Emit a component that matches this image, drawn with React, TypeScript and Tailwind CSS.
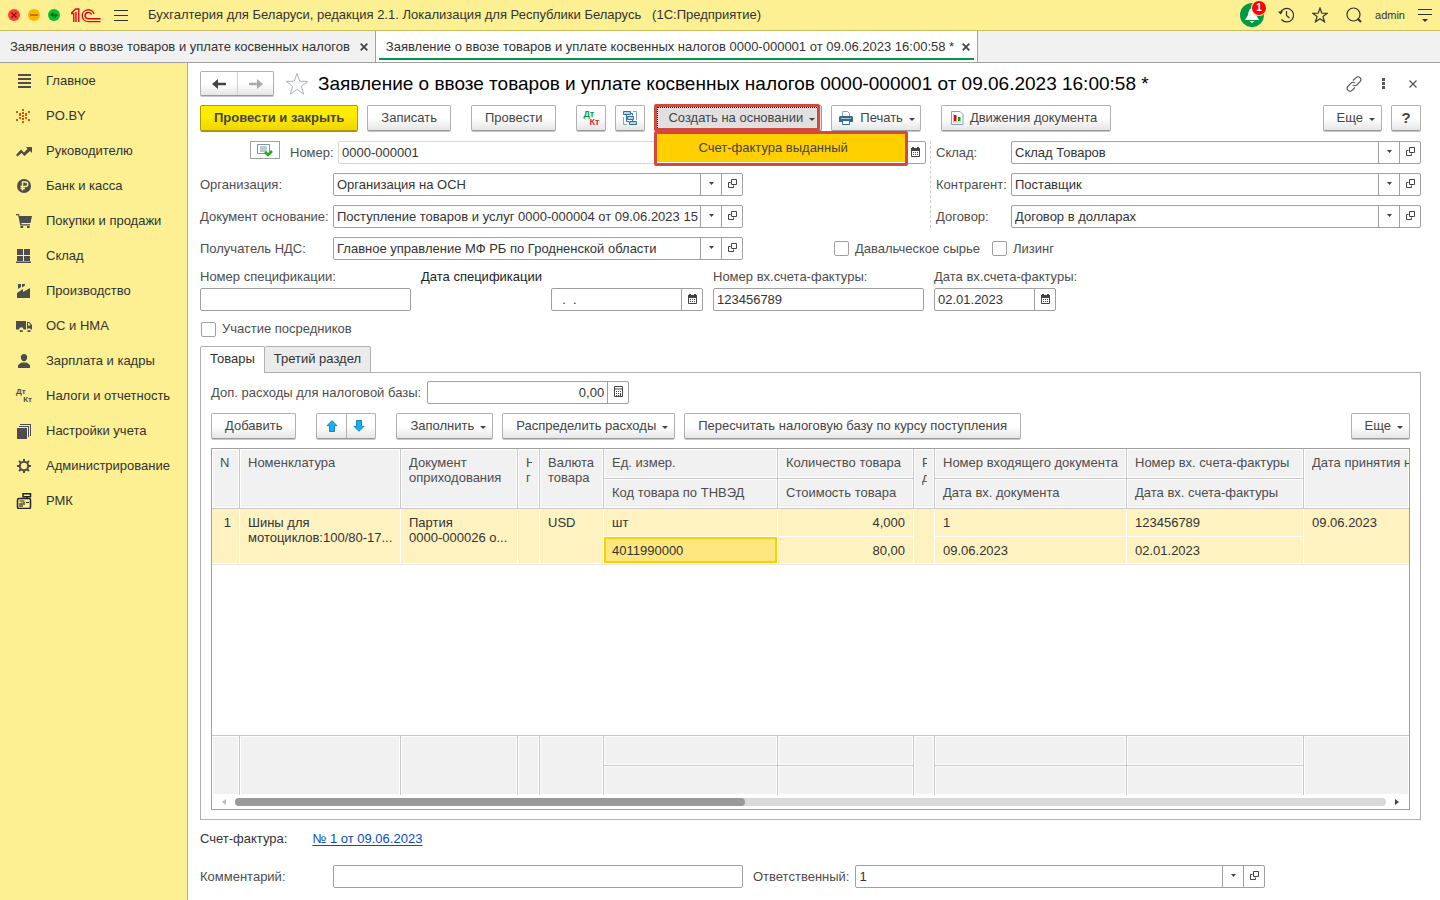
import { useState, type ReactNode } from "react";
import clsx from "clsx";

/* ---------- icons ---------- */

const MENU_ICONS: Record<string, ReactNode> = {
  main: <path d="M2 1h13v2H2zM2 5h13v2H2zM2 9h13v2H2zM2 13h13v2H2z" />,
  poby: (
    <path
      fill="#e8500a"
      d="M6 1h2v2H6zM6 4h2v2H6zM6 7h2v2H6zM6 10h2v2H6zM6 13h2v2H6zM0 3h2v2H0zM3 5h2v2H3zM3 9h2v2H3zM0 11h2v2H0zM9 5h2v2H9zM9 9h2v2H9zM12 3h2v2h-2zM12 11h2v2h-2zM3 7h2v1H3zM9 7h2v1H9z"
    />
  ),
  manager: (
    <path d="M0 12l5-5.500 3 3L11.500 5.800 10 4h6v6l-2-2-5.500 5-3-3L1.500 13.500z" />
  ),
  bank: (
    <>
      <circle cx="8" cy="8" r="7" />
      <path
        d="M6.500 12.500V4h3a2.200 2.200 0 0 1 0 4.500H4.500M4.500 10.500H9"
        fill="none"
        stroke="#fcf092"
        strokeWidth="1.400"
      />
    </>
  ),
  cart: (
    <path d="M0 1h3l.6 2H16l-1.500 7H5.200l.3 1.300H14V12.500H4.300L2.200 2.300H0zM4.500 13h2.600v2H4.500zM11 13h2.600v2H11z" />
  ),
  stock: <path d="M1 1h6v6H1zM8 1h6v6H8zM1 8h6v5H1zM8 8h6v5H8zM0 13.500h15V15H0z" />,
  factory: (
    <path d="M1 10l6-4v3l7-4v10H1zM2 1h3v3L2 6zM6 1h3v1.500L6 4.500z" />
  ),
  truck: (
    <path d="M0 3h10v8.500H7.500a2.200 2.200 0 0 0-4.400 0H0zM11 4h2.500L16 7v4.500h-1a2.200 2.200 0 0 0-4 0zM12 5v2.500h2.800L13 5zM3.800 12.200h3V14h-3zM11.500 12.200h3V14h-3z" />
  ),
  person: (
    <path d="M8 1c2 0 3.200 1.400 3.200 3.300S10 8.300 8 8.300 4.800 6.200 4.800 4.300 6 1 8 1zM2 15v-3l3.500-2.500h5L14 12v3z" />
  ),
  settings: <path d="M1 5h10v11H1zM3 3h10v11h-1V4H3zM4 1h11v12h-1V2H4z" />,
  gear: (
    <>
      <circle cx="8" cy="8" r="4.200" fill="none" stroke="#4d4d4d" strokeWidth="2" />
      <path
        d="M8 1v2.500M8 12.500V15M1 8h2.500M12.500 8H15M3 3l1.800 1.800M11.200 11.200L13 13M13 3l-1.800 1.800M4.800 11.200L3 13"
        stroke="#4d4d4d"
        strokeWidth="2"
      />
    </>
  ),
  cash: (
    <g fill="none" stroke="#222">
      <rect x="1.500" y="5.500" width="13" height="10" rx="1.500" strokeWidth="1.500" />
      <path d="M7 .8h7.500v3H7zM11 3.800v2" strokeWidth="1.500" />
      <path d="M3.500 8h5M4 14V10M6 14V9.500M8 12V9M10 9.500h3" strokeWidth="1.200" />
    </g>
  ),
};

function DtKt({ className, top, bottom }: { className: string; top?: string; bottom?: string }) {
  return (
    <span className={clsx("flex w-4 flex-col leading-[8px] font-bold", className)}>
      <span className={clsx("self-start", top)}>Дт</span>
      <span className={clsx("self-end", bottom)}>Кт</span>
    </span>
  );
}

function Logo() {
  return (
    <svg width="30" height="15" viewBox="0 0 30 15" fill="none" stroke="#e30613" strokeWidth="1.400" aria-label="1С">
      <path d="M0 5.500h2.800V14M.5 5L4.500 1h3.300v13M5 4v10" />
      <path d="M23 6A6 5.900 0 1 0 17.300 13.600H29.500" />
      <path d="M20.500 6.500A3.300 3.200 0 1 0 17.300 10.800H29.500" />
    </svg>
  );
}

function Caret() {
  return (
    <svg width="6" height="3" viewBox="0 0 6 3" className="mt-0.5 shrink-0">
      <path d="M0 0h6L3 3z" fill="#444" />
    </svg>
  );
}

function CalendarIcon() {
  return (
    <svg width="9" height="10" viewBox="0 0 9 10">
      <path d="M.5 2.500v7h8v-7" fill="none" stroke="#444" />
      <path
        d="M0 1h9v3H0zM1 0h2v2H1zM6 0h2v2H6zM2 5h1v1H2zM4 5h1v1H4zM6 5h1v1H6zM2 7h1v1H2zM4 7h1v1H4zM6 7h1v1H6z"
        fill="#444"
      />
    </svg>
  );
}

function CalculatorIcon() {
  return (
    <svg width="9" height="11" viewBox="0 0 9 11">
      <path d="M.5.5h8v10h-8zM1 3h7" fill="none" stroke="#444" />
      <path
        d="M2 5h1v1H2zM4 5h1v1H4zM6 5h1v1H6zM2 7h1v1H2zM4 7h1v1H4zM6 7h1v3H6zM2 9h1v1H2zM4 9h1v1H4z"
        fill="#444"
      />
    </svg>
  );
}

function OpenIcon() {
  return (
    <svg width="9" height="9" viewBox="0 0 9 9" fill="none" stroke="#444">
      <path d="M3.500.5h5v5h-5zM2.500 3.500h-2v5h5v-2" />
    </svg>
  );
}

function Star({ size, color }: { size: number; color: string }) {
  return (
    <svg width={size} height={size} viewBox="0 0 24 24" fill="none" stroke={color} strokeWidth={size > 20 ? 1 : 1.8}>
      <path d="M12 1.500l2.700 7.700 8.200.2-6.500 4.900 2.300 7.900L12 17.500l-6.700 4.700 2.300-7.900L1.100 9.400l8.200-.2z" />
    </svg>
  );
}

/* ---------- controls ---------- */

const RAISED =
  "rounded-[2px] border border-[#b0b0b0] border-b-[#999] bg-linear-to-b from-white from-50% to-[#e6e6e6] text-[#444] shadow-[0_1px_0_#c8c8c8]";

interface ButtonProps {
  children: ReactNode;
  label?: string;
  dropdown?: boolean;
  className?: string;
}

function Button({ children, label, dropdown, className = "px-[13px]" }: ButtonProps) {
  return (
    <button
      type="button"
      aria-label={label}
      className={clsx("flex h-[26px] shrink-0 items-center justify-center gap-1.5 whitespace-nowrap", RAISED, className)}
    >
      {children}
      {dropdown && <Caret />}
    </button>
  );
}

const ADDON_TITLES = { list: "Выбрать", open: "Открыть", calendar: "Календарь", calc: "Калькулятор" };

interface FieldProps {
  id: string;
  label?: string;
  value?: string;
  addons?: (keyof typeof ADDON_TITLES)[];
  className?: string;
  muted?: boolean;
  right?: boolean;
}

function Field({ id, label, value = "", addons = [], className, muted, right }: FieldProps) {
  return (
    <div
      className={clsx(
        "flex h-[23px] min-w-0 overflow-hidden rounded-[2px] border bg-white",
        muted ? "border-[#d8d8d8]" : "border-[#a0a0a0]",
        className
      )}
    >
      <input
        id={id}
        aria-label={label}
        defaultValue={value}
        className={clsx("w-0 min-w-0 flex-1 pl-[3px] text-[#333] outline-none", right && "pr-[3px] text-right")}
      />
      {addons.map((addon) => (
        <button
          key={addon}
          type="button"
          aria-label={ADDON_TITLES[addon]}
          className="flex w-[21px] shrink-0 items-center justify-center border-l border-[#a0a0a0] pb-0.5"
        >
          {addon === "list" && (
            <svg width="5" height="3" viewBox="0 0 5 3">
              <path d="M0 0h5L2.500 3z" fill="#444" />
            </svg>
          )}
          {addon === "open" && <OpenIcon />}
          {addon === "calendar" && <CalendarIcon />}
          {addon === "calc" && <CalculatorIcon />}
        </button>
      ))}
    </div>
  );
}

function LabeledRow({ id, label, value, labelClass, fieldClass }: { id: string; label: string; value: string; labelClass: string; fieldClass: string }) {
  return (
    <div className="flex items-center">
      <label htmlFor={id} className={clsx("shrink-0 whitespace-nowrap", labelClass)}>
        {label}
      </label>
      <Field id={id} value={value} addons={["list", "open"]} className={fieldClass} />
    </div>
  );
}

function Check({ children }: { children: ReactNode }) {
  return (
    <label className="flex items-center gap-1.5">
      <input type="checkbox" className="h-[15px] w-[15px] appearance-none rounded-[2px] border border-[#a0a0a0] bg-white checked:bg-[#009846]" />
      {children}
    </label>
  );
}

/* ---------- data ---------- */

const SECTIONS = [
  { icon: "main", label: "Главное" },
  { icon: "poby", label: "PO.BY" },
  { icon: "manager", label: "Руководителю" },
  { icon: "bank", label: "Банк и касса" },
  { icon: "cart", label: "Покупки и продажи" },
  { icon: "stock", label: "Склад" },
  { icon: "factory", label: "Производство" },
  { icon: "truck", label: "ОС и НМА" },
  { icon: "person", label: "Зарплата и кадры" },
  { icon: "dtkt", label: "Налоги и отчетность" },
  { icon: "settings", label: "Настройки учета" },
  { icon: "gear", label: "Администрирование" },
  { icon: "cash", label: "РМК" },
];

const TITLE = "Заявление о ввозе товаров и уплате косвенных налогов 0000-000001 от 09.06.2023 16:00:58 *";

interface Column {
  head: ReactNode;
  subhead?: string;
  value?: ReactNode;
  subvalue?: string;
  right?: boolean;
}

const COLUMNS: Column[] = [
  { head: "N", value: "1", right: true },
  { head: "Номенклатура", value: <>Шины для<br />мотоциклов:100/80-17...</> },
  { head: <>Документ<br />оприходования</>, value: <>Партия<br />0000-000026 о...</> },
  { head: <>Н<br />г</> },
  { head: <>Валюта<br />товара</>, value: "USD" },
  { head: "Ед. измер.", subhead: "Код товара по ТНВЭД", value: "шт", subvalue: "4011990000" },
  { head: "Количество товара", subhead: "Стоимость товара", value: "4,000", subvalue: "80,00", right: true },
  { head: <>Р<br />д</> },
  { head: "Номер входящего документа", subhead: "Дата вх. документа", value: "1", subvalue: "09.06.2023" },
  { head: "Номер вх. счета-фактуры", subhead: "Дата вх. счета-фактуры", value: "123456789", subvalue: "02.01.2023" },
  { head: "Дата принятия на учет", value: "09.06.2023" },
];

const HEAD_CELL =
  "overflow-hidden border-r border-[#c8c8c8] bg-[#f1f1f1] p-0 text-left align-top font-normal whitespace-nowrap text-[#4d4d4d] shadow-[inset_0_0_0_1px_#fff]";
const DATA_CELL = "overflow-hidden border-r border-b border-white p-0 align-top whitespace-nowrap text-[#333]";

function ColGroup() {
  return (
    <colgroup>
      <col className="w-[28px]" />
      <col className="w-[161px]" />
      <col className="w-[117px]" />
      <col className="w-[22px]" />
      <col className="w-[64px]" />
      <col className="w-[174px]" />
      <col className="w-[136px]" />
      <col className="w-[21px]" />
      <col className="w-[192px]" />
      <col className="w-[177px]" />
      <col />
    </colgroup>
  );
}

function GoodsTable() {
  const split = COLUMNS.filter((c) => c.subhead);
  return (
    <div className="mt-[9px] flex min-h-[362px] flex-1 flex-col overflow-hidden border border-[#a0a0a0] bg-white leading-[15px]">
      <table className="w-full table-fixed border-separate border-spacing-0 border-b border-[#e6e6e6]">
        <ColGroup />
        <thead>
          <tr className="h-[30px]">
            {COLUMNS.map((c, i) => (
              <th key={i} rowSpan={c.subhead ? 1 : 2} className={clsx(HEAD_CELL, "border-b last:border-r-0")}>
                <div className={clsx("mt-1.5 ml-2 overflow-hidden", !c.value && "mr-[7px]")}>{c.head}</div>
              </th>
            ))}
          </tr>
          <tr className="h-[30px]">
            {split.map((c) => (
              <th key={c.subhead} className={clsx(HEAD_CELL, "border-b")}>
                <div className="mt-1.5 ml-2">{c.subhead}</div>
              </th>
            ))}
          </tr>
        </thead>
        <tbody>
          <tr className="h-[28px]">
            {COLUMNS.map((c, i) => (
              <td key={i} rowSpan={c.subhead ? 1 : 2} className={clsx(DATA_CELL, "bg-[#fff2c1] last:border-r-0")}>
                <div className={clsx("mt-1.5 ml-2", c.right && "mr-2 text-right")}>{c.value}</div>
              </td>
            ))}
          </tr>
          <tr className="h-[27px]">
            {split.map((c, i) => (
              <td
                key={c.subhead}
                className={clsx(DATA_CELL, i === 0 ? "bg-[#ffe780] shadow-[inset_0_0_0_2px_#ffcf00]" : "bg-[#fff2c1]")}
              >
                <div className={clsx("mt-1.5 ml-2", c.right && "mr-2 text-right")}>{c.subvalue}</div>
              </td>
            ))}
          </tr>
        </tbody>
      </table>

      <div className="flex-1" />

      {/* Totals */}
      <table aria-hidden="true" className="w-full table-fixed border-separate border-spacing-0 border-t border-[#c8c8c8]">
        <ColGroup />
        <tbody>
          <tr className="h-[30px]">
            {COLUMNS.map((c, i) => (
              <td key={i} rowSpan={c.subhead ? 1 : 2} className={clsx(HEAD_CELL, "last:border-r-0", c.subhead && "border-b")} />
            ))}
          </tr>
          <tr className="h-[29px]">
            {split.map((c) => (
              <td key={c.subhead} className={HEAD_CELL} />
            ))}
          </tr>
        </tbody>
      </table>

      {/* Horizontal scroll */}
      <div className="flex h-[14px] items-center gap-2 px-[9px]">
        <svg width="6" height="6" viewBox="0 0 6 6">
          <path d="M5 0v6L1 3z" fill="#bbb" />
        </svg>
        <div className="h-2 flex-1 rounded-full bg-[#d9d9d9]">
          <div className="h-2 w-[510px] rounded-full bg-[#999]" />
        </div>
        <svg width="6" height="6" viewBox="0 0 6 6">
          <path d="M1 0v6l4-3z" fill="#444" />
        </svg>
      </div>
    </div>
  );
}

/* ---------- page parts ---------- */

function TopBar() {
  return (
    <header className="flex h-[31px] shrink-0 items-center border-b border-[#c9bd62] bg-[#fcf092] pr-2 pl-2">
      <svg width="52" height="12" viewBox="0 0 52 12">
        <circle cx="6" cy="6" r="6" fill="#fc4138" />
        <path d="M3.500 3.500l5 5M8.500 3.500l-5 5" stroke="#8c0b08" strokeWidth="1.300" />
        <circle cx="26" cy="6" r="6" fill="#fdb300" />
        <path d="M22 6h8" stroke="#a36200" strokeWidth="1.500" />
        <circle cx="46" cy="6" r="6" fill="#00c32b" />
        <path d="M42 6l3.500-3.200V8zM50 6l-3.500 3.200V4z" fill="#045c14" />
      </svg>
      <div className="ml-[11px]">
        <Logo />
      </div>
      <button type="button" aria-label="Меню" className="ml-[13px]">
        <svg width="14" height="11" viewBox="0 0 14 11" stroke="#333">
          <path d="M0 .5h14M0 5.500h14M0 10.500h14" />
        </svg>
      </button>
      <h1 className="ml-5 flex-1 whitespace-pre text-[#333]">
        {"Бухгалтерия для Беларуси, редакция 2.1. Локализация для Республики Беларусь   (1С:Предприятие)"}
      </h1>
      <div className="flex items-center">
        <button type="button" aria-label="Оповещения" className="relative">
          <svg width="24" height="24" viewBox="0 0 24 24">
            <circle cx="12" cy="12" r="12" fill="#009a44" />
            <path d="M12 5c3 1 3.500 4 4 7l3 5H5l3-5c.5-3 1-6 4-7zM9.500 18h5L12 20z" fill="#fff" />
          </svg>
          <span className="absolute -top-0.5 left-3 flex h-[14px] w-[14px] items-center justify-center rounded-full bg-[#f00] text-[10px] font-bold text-white ring-1 ring-[#fcf092]">
            1
          </span>
        </button>
        <button type="button" aria-label="История" className="ml-[14px]">
          <svg width="16" height="16" viewBox="0 0 16 16" fill="none" stroke="#333" strokeWidth="1.200">
            <path d="M2.300 6A6.800 6.800 0 1 1 3.500 12.500M8.500 4v4.500l3 2.500" />
            <path d="M0 4.500h5L2.500 7.500z" fill="#333" stroke="none" />
          </svg>
        </button>
        <button type="button" aria-label="Избранное" className="ml-[18px]">
          <Star size={16} color="#333" />
        </button>
        <button type="button" aria-label="Поиск" className="ml-[18px]">
          <svg width="16" height="16" viewBox="0 0 16 16" fill="none" stroke="#333">
            <circle cx="7.500" cy="7.500" r="6.500" strokeWidth="1.200" />
            <path d="M11.500 11.500l3.500 3.500" strokeWidth="2" />
          </svg>
        </button>
        <span className="ml-[13px] text-[11px] text-[#333]">admin</span>
        <button type="button" aria-label="Настройки" className="ml-[13px]">
          <svg width="14" height="13" viewBox="0 0 14 13">
            <path d="M0 .5h14M0 5.500h14" stroke="#333" />
            <path d="M4 10h6l-3 3z" fill="#333" />
          </svg>
        </button>
      </div>
    </header>
  );
}

function WindowTabs() {
  const cross = (
    <svg width="8" height="8" viewBox="0 0 8 8" stroke="#444" strokeWidth="1.800">
      <path d="M.7.7l6.600 6.600M7.300.7L.7 7.300" />
    </svg>
  );
  return (
    <nav className="flex h-8 shrink-0 border-b border-[#a0a0a0] bg-[#f1f1f1] whitespace-nowrap text-[#333]">
      <div className="flex items-center gap-2.5 border-r border-[#a0a0a0] pr-[7px] pl-2.5">
        <a href="#list">Заявления о ввозе товаров и уплате косвенных налогов</a>
        <button type="button" aria-label="Закрыть">{cross}</button>
      </div>
      <div className="flex border-r border-[#a0a0a0] bg-white px-[3px] pb-0.5">
        <div className="flex items-center gap-2 border-b-2 border-[#009a44] pt-1 pr-1 pl-[7px]">
          <a href="#document">{TITLE}</a>
          <button type="button" aria-label="Закрыть">{cross}</button>
        </div>
      </div>
    </nav>
  );
}

function Sidebar() {
  return (
    <aside className="w-[188px] shrink-0 border-r border-[#b9ae55] bg-[#fcf092]">
      {SECTIONS.map((s) => (
        <a key={s.label} href="#section" className="flex h-[35px] items-center gap-3.5 pl-4 whitespace-nowrap text-[#333]">
          {s.icon === "dtkt" ? (
            <DtKt className="text-[8px] text-[#4d4d4d]" />
          ) : (
            <svg width="16" height="16" viewBox="0 0 16 16" fill="#4d4d4d" fillRule="evenodd" className="shrink-0">
              {MENU_ICONS[s.icon]}
            </svg>
          )}
          {s.label}
        </a>
      ))}
    </aside>
  );
}

function TitleRow() {
  return (
    <div className="flex h-[25px] items-center">
      <div className={clsx("flex h-[25px] shrink-0", RAISED)}>
        <button type="button" aria-label="Назад" className="flex w-9 items-center justify-center">
          <svg width="14" height="10" viewBox="0 0 14 10" fill="#444">
            <path d="M0 5l6-5v3.800h8v2.400H6V10z" />
          </svg>
        </button>
        <button type="button" aria-label="Вперед" className="flex w-9 items-center justify-center border-l border-[#d0d0d0]">
          <svg width="14" height="10" viewBox="0 0 14 10" fill="#aaa">
            <path d="M14 5L8 0v3.800H0v2.400h8V10z" />
          </svg>
        </button>
      </div>
      <button type="button" aria-label="В избранное" className="ml-[11px]">
        <Star size={24} color="#a9b4c2" />
      </button>
      <h2 className="ml-[9px] flex-1 text-[19px] whitespace-nowrap text-black">{TITLE}</h2>
      <div className="flex items-center pr-1">
        <button type="button" aria-label="Ссылка">
          <svg width="16" height="16" viewBox="0 0 16 16" fill="none" stroke="#555" strokeWidth="1.200">
            <path d="M7 4.500L10 1.700a2.600 2.600 0 0 1 4 0 2.600 2.600 0 0 1 0 4L11 8.800a2.600 2.600 0 0 1-4 0M9 11.500L6 14.300a2.600 2.600 0 0 1-4 0 2.600 2.600 0 0 1 0-4L5 7.200a2.600 2.600 0 0 1 4 0" />
          </svg>
        </button>
        <button type="button" aria-label="Еще действия" className="ml-5">
          <svg width="3" height="11" viewBox="0 0 3 11" fill="#555">
            <path d="M0 0h3v3H0zM0 4h3v3H0zM0 8h3v3H0z" />
          </svg>
        </button>
        <button type="button" aria-label="Закрыть" className="ml-6">
          <svg width="8" height="8" viewBox="0 0 8 8" stroke="#555" strokeWidth="1.200">
            <path d="M.5.5l7 7M7.500.5l-7 7" />
          </svg>
        </button>
      </div>
    </div>
  );
}

function CommandBar() {
  const [open, setOpen] = useState(true);

  return (
    <div className="mt-[9px] flex">
      <button
        type="button"
        className="h-[26px] shrink-0 rounded-[2px] border border-[#b09a00] bg-linear-to-b from-[#ffec00] from-40% to-[#f0d500] px-[13px] font-bold text-[#444] shadow-[0_1px_0_#a89300]"
      >
        Провести и закрыть
      </button>
      <Button className="ml-[9px] px-[13px]">Записать</Button>
      <Button className="ml-5 px-[13px]">Провести</Button>
      <Button label="Проводки" className="ml-5 w-[30px]">
        <DtKt className="text-[9px]" top="text-[#009a44]" bottom="text-[#e5252a]" />
      </Button>
      <Button label="Структура подчиненности" className="ml-[9px] w-[30px]">
        <svg width="14" height="14" viewBox="0 0 14 14" fill="#b5d5ea" stroke="#2f73a3">
          <path d="M3.500 4v6.500H6M9.500 8v2M7.500 2.500h2v2" fill="none" />
          <path d="M.5.500h7v3h-7zM4.500 5.500h6v3h-6zM6.500 10.500h7v3h-7z" />
          <path d="M10 .5h3.500V9M4 13.500H.5V6" fill="none" stroke="#7fa9c8" />
        </svg>
      </Button>

      <div className="relative ml-[9px]">
        <button
          type="button"
          aria-expanded={open}
          onClick={() => setOpen(!open)}
          className="flex h-[26px] items-center gap-1.5 rounded-[2px] border border-[#999] bg-[#e0e0e0] pr-1.5 pl-[13px] whitespace-nowrap text-[#444] shadow-[0_1px_0_#c8c8c8]"
        >
          Создать на основании
          <Caret />
        </button>
        <div className="pointer-events-none absolute -top-px right-0.5 bottom-0 left-0 rounded-[2px] border-3 border-[#d1493f]">
          <div className="h-full border-t border-l border-dotted border-black" />
        </div>
        {open && (
          <div role="menu" className="absolute top-[26px] left-0 z-10 w-[254px] rounded-[2px] border-3 border-[#d1493f] bg-white pb-px">
            <button type="button" role="menuitem" className="h-7 w-full bg-[#ffcf00] pl-[41px] text-left text-[#444]">
              Счет-фактура выданный
            </button>
          </div>
        )}
      </div>

      <Button dropdown className="ml-[9px] pr-[5px] pl-[7px]">
        <svg width="14" height="14" viewBox="0 0 14 14">
          <path d="M3.500 5V.500h5l2 2V5" fill="#fff" stroke="#8aa0b5" />
          <path d="M1 5h12l1 1v5H0V6z" fill="#37698f" />
          <path d="M2 7.500h10" stroke="#a9c3d8" />
          <path d="M3.500 9.500h7v4h-7z" fill="#fff" stroke="#37698f" />
        </svg>
        <span className="pl-px">Печать</span>
      </Button>
      <Button className="ml-5 pr-[13px] pl-2">
        <svg width="14" height="14" viewBox="0 0 14 14">
          <path d="M1.500.500h8.500l3 3v10H1.500z" fill="#fff" stroke="#8aa0b5" />
          <path d="M4 4h2.500v6H4z" fill="#e00" />
          <path d="M8 6h2.500v4H8z" fill="#0a0" />
          <path d="M3.500 3v8h8" fill="none" stroke="#bbb" />
        </svg>
        <span>Движения документа</span>
      </Button>
      <div className="flex-1" />
      <Button dropdown className="pr-1.5 pl-[13px]">
        Еще
      </Button>
      <Button className="ml-[9px] w-[30px] text-[15px] font-bold">?</Button>
    </div>
  );
}

function DocumentFields() {
  return (
    <div className="mt-2.5 text-[#4d4d4d]">
      <div className="flex">
        <div className="flex w-[731px] shrink-0 flex-col gap-[9px] border-r border-dashed border-[#ccc] pr-1">
          <div className="flex items-center">
            <button type="button" aria-label="Состояние документа" className="ml-[50px] flex h-[18px] w-[30px] shrink-0 items-center justify-center self-start border border-[#a0a0a0]">
              <svg width="16" height="13" viewBox="0 0 16 13" fill="none">
                <path d="M.5.5h12v9H.5zM3 3h7M3 5h7M3 7h7" stroke="#7b93ad" />
                <path d="M8 8l3 3 4-4" stroke="#12b312" strokeWidth="2.600" />
              </svg>
            </button>
            <label htmlFor="number" className="ml-2.5 w-12">
              Номер:
            </label>
            <Field id="number" value="0000-000001" muted className="w-[350px]" />
            <Field id="date" label="Дата" addons={["calendar"]} className="ml-5 flex-1" />
          </div>
          <LabeledRow id="org" label="Организация:" value="Организация на ОСН" labelClass="w-[133px]" fieldClass="w-[410px]" />
          <LabeledRow
            id="base"
            label="Документ основание:"
            value="Поступление товаров и услуг 0000-000004 от 09.06.2023 15"
            labelClass="w-[133px]"
            fieldClass="w-[410px]"
          />
        </div>
        <div className="ml-[5px] flex flex-1 flex-col gap-[9px]">
          <LabeledRow id="store" label="Склад:" value="Склад Товаров" labelClass="w-[75px]" fieldClass="flex-1" />
          <LabeledRow id="partner" label="Контрагент:" value="Поставщик" labelClass="w-[75px]" fieldClass="flex-1" />
          <LabeledRow id="contract" label="Договор:" value="Договор в долларах" labelClass="w-[75px]" fieldClass="flex-1" />
        </div>
      </div>

      <div className="mt-[9px] flex items-center">
        <LabeledRow
          id="vat"
          label="Получатель НДС:"
          value="Главное управление МФ РБ по Гродненской области"
          labelClass="w-[133px]"
          fieldClass="w-[410px]"
        />
        <div className="ml-[91px] flex gap-3">
          <Check>Давальческое сырье</Check>
          <Check>Лизинг</Check>
        </div>
      </div>

      <div className="mt-[9px] flex gap-2.5">
        <div className="w-[211px]">
          <label htmlFor="spec" className="mb-[3px] block">Номер спецификации:</label>
          <Field id="spec" />
        </div>
        <div className="w-[282px]">
          <label htmlFor="spec-date" className="mb-[3px] block text-[#222]">Дата спецификации</label>
          <Field id="spec-date" value="  .  ." addons={["calendar"]} className="ml-auto w-[152px]" />
        </div>
        <div className="w-[211px]">
          <label htmlFor="invoice" className="mb-[3px] block">Номер вх.счета-фактуры:</label>
          <Field id="invoice" value="123456789" />
        </div>
        <div>
          <label htmlFor="invoice-date" className="mb-[3px] block">Дата вх.счета-фактуры:</label>
          <Field id="invoice-date" value="02.01.2023" addons={["calendar"]} className="w-[122px]" />
        </div>
      </div>

      <div className="mt-2 ml-px flex h-5 items-center">
        <Check>Участие посредников</Check>
      </div>
    </div>
  );
}

function GoodsPanel() {
  return (
    <section className="mt-[7px] flex flex-1 flex-col">
      <div role="tablist" className="relative z-1 -mb-px flex">
        <button type="button" role="tab" aria-selected="true" className="h-[27px] rounded-t-[2px] border border-b-0 border-[#b0b0b0] bg-white px-[9px] pb-0.5 text-[#333]">
          Товары
        </button>
        <button type="button" role="tab" aria-selected="false" className="h-[27px] rounded-t-[2px] border border-l-0 border-[#b0b0b0] bg-[#ebebeb] px-[9px] pb-0.5 text-[#333]">
          Третий раздел
        </button>
      </div>
      <div className="flex flex-1 flex-col border border-[#b0b0b0] px-2.5 pt-2 pb-[9px] text-[#4d4d4d]">
        <div className="flex items-center gap-1.5">
          <label htmlFor="extra">Доп. расходы для налоговой базы:</label>
          <Field id="extra" value="0,00" addons={["calc"]} right className="w-[202px]" />
        </div>
        <div className="mt-[9px] flex gap-[9px]">
          <Button>Добавить</Button>
          <div className={clsx("mx-[11px] flex h-[26px] shrink-0", RAISED)}>
            <button type="button" aria-label="Вверх" className="flex w-[30px] items-center justify-center border-r border-[#b0b0b0]">
              <svg width="12" height="12" viewBox="0 0 12 12" fill="#16b1f3" stroke="#1583b8">
                <path d="M6 .7l5 5H8.500v5.800h-5V5.700H1z" />
              </svg>
            </button>
            <button type="button" aria-label="Вниз" className="flex w-7 items-center justify-center pr-1">
              <svg width="12" height="12" viewBox="0 0 12 12" fill="#16b1f3" stroke="#1583b8">
                <path d="M6 11.300l5-5H8.500V.5h-5v5.800H1z" />
              </svg>
            </button>
          </div>
          <Button dropdown className="pr-1.5 pl-[13px]">
            Заполнить
          </Button>
          <Button dropdown className="pr-1.5 pl-[13px]">
            Распределить расходы
          </Button>
          <Button>Пересчитать налоговую базу по курсу поступления</Button>
          <div className="flex-1" />
          <Button dropdown className="pr-1.5 pl-[13px]">
            Еще
          </Button>
        </div>
        <GoodsTable />
      </div>
    </section>
  );
}

export default function App() {
  return (
    <div className="flex min-h-screen flex-col overflow-hidden bg-white font-['Liberation_Sans',Arial,sans-serif] text-[13px] leading-4">
      <TopBar />
      <WindowTabs />
      <div className="flex flex-1">
        <Sidebar />
        <main className="flex min-w-0 flex-1 flex-col pt-2 pr-[19px] pb-3 pl-3">
          <TitleRow />
          <CommandBar />
          <DocumentFields />
          <GoodsPanel />
          <div className="mt-[11px] flex gap-[25px]">
            <span className="text-[#333]">Счет-фактура:</span>
            <a href="#invoice" className="text-[#0b4bc0] underline underline-offset-2">
              № 1 от 09.06.2023
            </a>
          </div>
          <div className="mt-[18px] flex items-center text-[#4d4d4d]">
            <label htmlFor="comment" className="w-[133px]">Комментарий:</label>
            <Field id="comment" className="w-[410px]" />
            <label htmlFor="owner" className="mr-1.5 ml-2.5">Ответственный:</label>
            <Field id="owner" value="1" addons={["list", "open"]} className="w-[410px]" />
          </div>
        </main>
      </div>
    </div>
  );
}
